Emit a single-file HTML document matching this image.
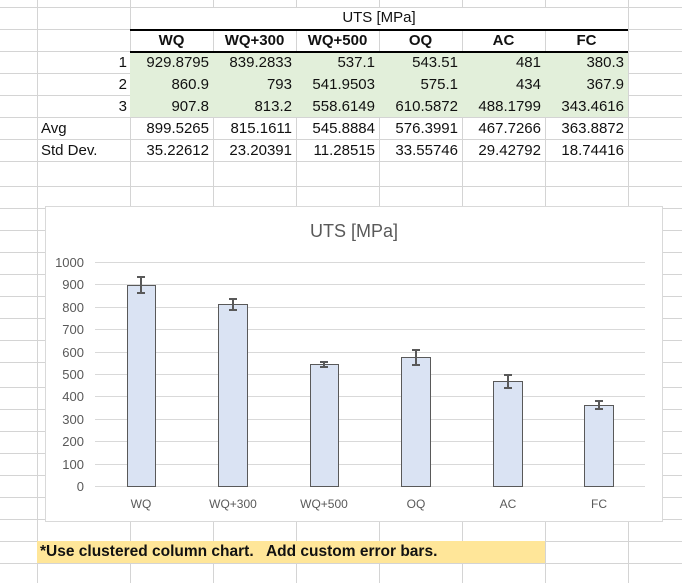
<!DOCTYPE html>
<html><head><meta charset="utf-8"><style>
body{margin:0;width:682px;height:583px;background:#fff;position:relative;overflow:hidden;font-family:"Liberation Sans",sans-serif}
.h{position:absolute;left:0;width:682px;height:1px;background:#d4d4d4}
.v{position:absolute;top:0;height:583px;width:1px;background:#d4d4d4}
.c{position:absolute;font-size:15px;color:#111;line-height:22px;height:22px}
.r{text-align:right;width:79px}
.b{font-weight:bold;text-align:center;width:83px}
</style></head><body>
<div class="h" style="top:7px"></div><div class="h" style="top:29px"></div><div class="h" style="top:51px"></div><div class="h" style="top:73px"></div><div class="h" style="top:95px"></div><div class="h" style="top:117px"></div><div class="h" style="top:139px"></div><div class="h" style="top:161px"></div><div class="h" style="top:186px"></div><div class="h" style="top:208px"></div><div class="h" style="top:230px"></div><div class="h" style="top:252px"></div><div class="h" style="top:274px"></div><div class="h" style="top:296px"></div><div class="h" style="top:318px"></div><div class="h" style="top:340px"></div><div class="h" style="top:362px"></div><div class="h" style="top:387px"></div><div class="h" style="top:409px"></div><div class="h" style="top:431px"></div><div class="h" style="top:453px"></div><div class="h" style="top:475px"></div><div class="h" style="top:497px"></div><div class="h" style="top:519px"></div><div class="h" style="top:541px"></div><div class="h" style="top:563px"></div>
<div class="v" style="left:37px"></div><div class="v" style="left:130px"></div><div class="v" style="left:213px"></div><div class="v" style="left:296px"></div><div class="v" style="left:379px"></div><div class="v" style="left:462px"></div><div class="v" style="left:545px"></div><div class="v" style="left:628px"></div>
<div style="position:absolute;left:131px;top:8px;width:497px;height:21px;background:#fff"></div>
<div style="position:absolute;left:130px;top:52px;width:498px;height:65px;background:#e2efda"></div>
<div style="position:absolute;left:130px;top:29px;width:498px;height:2px;background:#000"></div>
<div style="position:absolute;left:130px;top:51px;width:498px;height:2px;background:#000"></div>
<div class="c" style="left:130px;top:7px;width:498px;text-align:center;font-size:15px">UTS [MPa]</div>
<div class="c b" style="left:130px;top:30px">WQ</div><div class="c b" style="left:213px;top:30px">WQ+300</div><div class="c b" style="left:296px;top:30px">WQ+500</div><div class="c b" style="left:379px;top:30px">OQ</div><div class="c b" style="left:462px;top:30px">AC</div><div class="c b" style="left:545px;top:30px">FC</div>
<div class="c r" style="left:48px;top:52px">1</div><div class="c r" style="left:130px;top:52px">929.8795</div><div class="c r" style="left:213px;top:52px">839.2833</div><div class="c r" style="left:296px;top:52px">537.1</div><div class="c r" style="left:379px;top:52px">543.51</div><div class="c r" style="left:462px;top:52px">481</div><div class="c r" style="left:545px;top:52px">380.3</div>
<div class="c r" style="left:48px;top:74px">2</div><div class="c r" style="left:130px;top:74px">860.9</div><div class="c r" style="left:213px;top:74px">793</div><div class="c r" style="left:296px;top:74px">541.9503</div><div class="c r" style="left:379px;top:74px">575.1</div><div class="c r" style="left:462px;top:74px">434</div><div class="c r" style="left:545px;top:74px">367.9</div>
<div class="c r" style="left:48px;top:96px">3</div><div class="c r" style="left:130px;top:96px">907.8</div><div class="c r" style="left:213px;top:96px">813.2</div><div class="c r" style="left:296px;top:96px">558.6149</div><div class="c r" style="left:379px;top:96px">610.5872</div><div class="c r" style="left:462px;top:96px">488.1799</div><div class="c r" style="left:545px;top:96px">343.4616</div>
<div class="c" style="left:41px;top:118px">Avg</div><div class="c r" style="left:130px;top:118px">899.5265</div><div class="c r" style="left:213px;top:118px">815.1611</div><div class="c r" style="left:296px;top:118px">545.8884</div><div class="c r" style="left:379px;top:118px">576.3991</div><div class="c r" style="left:462px;top:118px">467.7266</div><div class="c r" style="left:545px;top:118px">363.8872</div>
<div class="c" style="left:41px;top:140px">Std Dev.</div><div class="c r" style="left:130px;top:140px">35.22612</div><div class="c r" style="left:213px;top:140px">23.20391</div><div class="c r" style="left:296px;top:140px">11.28515</div><div class="c r" style="left:379px;top:140px">33.55746</div><div class="c r" style="left:462px;top:140px">29.42792</div><div class="c r" style="left:545px;top:140px">18.74416</div>
<svg style="position:absolute;left:0;top:0" width="682" height="583" font-family="Liberation Sans,sans-serif">
<rect x="45.5" y="206.5" width="617" height="315" fill="#fff" stroke="#d9d9d9"/>
<text x="354" y="237" text-anchor="middle" font-size="18" fill="#595959">UTS [MPa]</text>
<g stroke="#d9d9d9" stroke-width="1">
<line x1="95" x2="645" y1="262.5" y2="262.5"/><line x1="95" x2="645" y1="284.5" y2="284.5"/><line x1="95" x2="645" y1="307.5" y2="307.5"/><line x1="95" x2="645" y1="329.5" y2="329.5"/><line x1="95" x2="645" y1="352.5" y2="352.5"/><line x1="95" x2="645" y1="374.5" y2="374.5"/><line x1="95" x2="645" y1="396.5" y2="396.5"/><line x1="95" x2="645" y1="419.5" y2="419.5"/><line x1="95" x2="645" y1="441.5" y2="441.5"/><line x1="95" x2="645" y1="464.5" y2="464.5"/><line x1="95" x2="645" y1="486.5" y2="486.5"/></g>
<g font-size="13" fill="#595959" text-anchor="end">
<text x="84" y="267">1000</text><text x="84" y="289">900</text><text x="84" y="312">800</text><text x="84" y="334">700</text><text x="84" y="357">600</text><text x="84" y="379">500</text><text x="84" y="401">400</text><text x="84" y="424">300</text><text x="84" y="446">200</text><text x="84" y="469">100</text><text x="84" y="491">0</text></g>
<g fill="#dae3f3" stroke="#595959" stroke-width="1">
<rect x="127.5" y="285.5" width="28" height="201"/>
<rect x="218.5" y="304.5" width="29" height="182"/>
<rect x="310.5" y="364.5" width="28" height="122"/>
<rect x="401.5" y="357.5" width="29" height="129"/>
<rect x="493.5" y="381.5" width="29" height="105"/>
<rect x="584.5" y="405.5" width="29" height="81"/></g>
<g stroke="#595959" stroke-width="2" fill="none">
<path d="M141 277V293M137 277H145M137 293H145"/>
<path d="M233 299V310M229 299H237M229 310H237"/>
<path d="M324 362V367M320 362H328M320 367H328"/>
<path d="M416 350V365M412 350H420M412 365H420"/>
<path d="M508 375V388M504 375H512M504 388H512"/>
<path d="M599 401V409M595 401H603M595 409H603"/></g>
<g font-size="12" fill="#595959" text-anchor="middle">
<text x="141" y="508">WQ</text><text x="233" y="508">WQ+300</text><text x="324" y="508">WQ+500</text><text x="416" y="508">OQ</text><text x="508" y="508">AC</text><text x="599" y="508">FC</text></g>
</svg>
<div style="position:absolute;left:37px;top:541px;width:508px;height:22px;background:#ffe699"></div>
<div class="c" style="left:40px;top:541px;font-weight:bold;font-size:15.5px">*Use clustered column chart.&nbsp;&nbsp; Add custom error bars.</div>
</body></html>
